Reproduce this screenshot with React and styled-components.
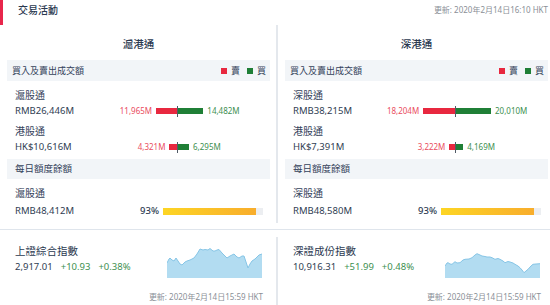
import React from 'react'
import styled, { createGlobalStyle } from 'styled-components'

const GlobalStyle = createGlobalStyle`
    html, body {
        margin: 0;
        padding: 0;
        background: #ffffff;
    }
    body {
        font-family: 'Noto Sans', 'Noto Sans CJK TC', sans-serif;
        font-size: 10px;
        line-height: 14px;
        color: #2f3d52;
        width: 550px;
        height: 305px;
        overflow: hidden;
    }
`

const colors = {
    text: '#2f3d52',
    muted: '#8a8f97',
    line: '#e4e8ed',
    headerBg: '#f2f5f8',
    red: '#e8283f',
    redText: '#ea4c60',
    green: '#1f7f36',
    greenText: '#3d8f50',
}

const SCALE = 1.75 / 1000

const Page = styled.div`
    width: 550px;
    height: 305px;
`
const TopBar = styled.header`
    height: 25px;
    box-sizing: border-box;
    display: flex;
    justify-content: space-between;
    align-items: flex-start;
    padding: 3px 2px 0 15px;
    border-left: 3px solid #e8264b;
`
const PageTitle = styled.h1`
    margin: 0;
    font-size: 10px;
    line-height: 14px;
    font-weight: 500;
    color: #2b3950;
`
const Stamp = styled.span`
    font-size: 8px;
    line-height: 14px;
    color: ${colors.muted};
    padding-right: ${(p) => p.$pad || 0}px;
`
const Columns = styled.div`
    display: grid;
    grid-template-columns: 276px 274px;
`
const Column = styled.section`
    box-sizing: border-box;
    padding: ${(p) => (p.$right ? '0 2px 0 7px' : '0 6px 0 7px')};
    border-left: ${(p) => (p.$right ? `2px solid ${colors.line}` : 'none')};
`
const PanelTitle = styled.h2`
    margin: 0;
    height: 35px;
    box-sizing: border-box;
    padding-top: 12px;
    text-align: center;
    font-size: 10.5px;
    line-height: 14px;
    font-weight: 500;
    color: #2b3950;
`
const SectionHead = styled.div`
    height: ${(p) => p.$h}px;
    display: flex;
    align-items: center;
    justify-content: space-between;
    padding: 0 4px 0 ${(p) => p.$indent}px;
    background: ${colors.headerBg};
    font-size: ${(p) => p.$size}px;
    color: #34425a;
`
const Legend = styled.div`
    display: flex;
    align-items: center;
    gap: 4px;
    font-size: 9px;
`
const Swatch = styled.span`
    width: 6px;
    height: 6px;
    background: ${(p) => p.$color};
    margin-left: 3px;
`
const Blocks = styled.div`
    padding: ${(p) => p.$pad};
    display: flex;
    flex-direction: column;
    gap: ${(p) => p.$gap}px;
`
const Block = styled.div`
    padding-left: 8px;
`
const Name = styled.div`
    font-size: 10px;
    line-height: 16px;
    color: #34425a;
`
const ValueRow = styled.div`
    display: flex;
    align-items: center;
    height: 16px;
    margin-top: ${(p) => p.$gap || 0}px;
    font-size: 9.5px;
    color: ${colors.text};
`
const Amount = styled.span`
    flex: 1;
`
const SellSide = styled.div`
    display: flex;
    align-items: center;
    gap: 4px;
    font-size: 8px;
    color: ${colors.redText};
`
const BuySide = styled.div`
    width: 92px;
    display: flex;
    align-items: center;
    gap: 4px;
    font-size: 8px;
    color: ${colors.greenText};
`
const Bar = styled.span`
    height: 6px;
    background: ${(p) => p.$color};
`
const Axis = styled.span`
    width: 1px;
    height: 11px;
    background: #505a66;
`
const Percent = styled.span`
    font-size: 9.5px;
    font-weight: 500;
    margin-right: 4px;
`
const Track = styled.div`
    width: 100px;
    height: 7px;
    margin-right: 7px;
    background: #eceef1;
`
const Fill = styled.div`
    height: 100%;
    background: linear-gradient(90deg, #fdd524, #f8ad2c);
`
const Bottom = styled.div`
    margin-top: 6px;
    padding-top: 7px;
    border-top: 1px solid #dfe5ec;
    display: grid;
    grid-template-columns: 276px 274px;
`
const IndexColumn = styled.section`
    box-sizing: border-box;
    height: 68px;
    display: flex;
    flex-direction: column;
    padding: ${(p) => (p.$right ? '0 2px 0 7px' : '0 6px 0 7px')};
    border-left: ${(p) => (p.$right ? `2px solid ${colors.line}` : 'none')};
`
const IndexRow = styled.div`
    display: flex;
    justify-content: space-between;
    padding: 6px 8px 0;
    height: 41px;
    box-sizing: border-box;
`
const IndexName = styled.div`
    font-size: 10.5px;
    line-height: 16px;
    color: #2b3950;
`
const Quote = styled.div`
    display: flex;
    gap: 8px;
    font-size: 9.5px;
    line-height: 16px;
`
const Change = styled.span`
    color: ${colors.greenText};
`
const Chart = styled.svg`
    margin-top: 4px;
    display: block;
`
const Footer = styled.div`
    margin-top: auto;
    margin-bottom: 1px;
    height: 14px;
    font-size: 8px;
    line-height: 14px;
    text-align: right;
`

const sections = [
    {
        title: '滬港通',
        trades: [
            { name: '滬股通', value: 'RMB26,446M', sell: 11965, buy: 14482 },
            { name: '港股通', value: 'HK$10,616M', sell: 4321, buy: 6295 },
        ],
        quota: { name: '滬股通', value: 'RMB48,412M', pct: 93 },
        index: {
            name: '上證綜合指數',
            last: '2,917.01',
            change: '+10.93',
            pct: '+0.38%',
            points: [
                [0, 16], [2, 12], [3, 11], [5, 13], [7, 14], [9, 11], [11, 14], [13, 17],
                [15, 18], [18, 15], [20, 14], [23, 13], [27, 11], [30, 7], [33, 2],
                [36, 3], [38, 2.5], [41, 3], [43, 1.5], [46, 4], [48, 4], [50, 3],
                [52, 2.5], [55, 6], [58, 9], [60, 11], [63, 9], [67, 7], [70, 10],
                [72, 11], [75, 9], [77, 9], [79, 15], [81, 21], [83, 17], [85, 14],
                [88, 12], [90, 10], [92, 8], [95, 7],
            ],
        },
    },
    {
        title: '深港通',
        trades: [
            { name: '深股通', value: 'RMB38,215M', sell: 18204, buy: 20010 },
            { name: '港股通', value: 'HK$7,391M', sell: 3222, buy: 4169 },
        ],
        quota: { name: '深股通', value: 'RMB48,580M', pct: 93 },
        index: {
            name: '深證成份指數',
            last: '10,916.31',
            change: '+51.99',
            pct: '+0.48%',
            points: [
                [0, 19], [2, 16], [3, 15.7], [5, 17], [7, 17.3], [10, 14.7], [12, 16],
                [15, 15.7], [18, 13], [20, 12.3], [24, 12], [27, 10.7], [30, 8],
                [32, 6.7], [35, 8], [37, 9], [40, 9.5], [42, 10], [45, 10], [47, 10.7],
                [50, 12.3], [53, 11.5], [55, 12.3], [58, 14], [60, 15.7], [63, 14.5],
                [65, 15], [68, 16], [70, 17.3], [73, 19], [75, 20.7], [77, 23],
                [79, 25.7], [81, 24], [83, 22.3], [86, 19], [88, 17.3], [91, 17],
                [95, 16.7],
            ],
        },
    },
]

function fmt(n) {
    return n.toLocaleString('en-US') + 'M'
}

function Spark({ points }) {
    const line = points.map(([x, y]) => `${x},${y}`).join(' ')
    const area = `0,31 ${line} 95,31`
    return (
        <Chart width="95" height="31" viewBox="0 0 95 31">
            <polygon points={area} fill="#b2dcf1" />
            <polyline points={line} fill="none" stroke="#86c5e6" strokeWidth="1" />
        </Chart>
    )
}

function TradeBlock({ trade }) {
    return (
        <Block>
            <Name>{trade.name}</Name>
            <ValueRow>
                <Amount>{trade.value}</Amount>
                <SellSide>
                    {fmt(trade.sell)}
                    <Bar $color={colors.red} style={{ width: trade.sell * SCALE }} />
                </SellSide>
                <Axis />
                <BuySide>
                    <Bar $color={colors.green} style={{ width: trade.buy * SCALE }} />
                    {fmt(trade.buy)}
                </BuySide>
            </ValueRow>
        </Block>
    )
}

function Panel({ section, right }) {
    return (
        <Column $right={right}>
            <PanelTitle>{section.title}</PanelTitle>
            <SectionHead $h={21} $indent={5} $size={9}>
                <span>買入及賣出成交額</span>
                <Legend>
                    <Swatch $color={colors.red} />
                    <span>賣</span>
                    <Swatch $color={colors.green} />
                    <span>買</span>
                </Legend>
            </SectionHead>
            <Blocks $pad="6px 0 4px" $gap={4}>
                {section.trades.map((t) => (
                    <TradeBlock key={t.name + t.value} trade={t} />
                ))}
            </Blocks>
            <SectionHead $h={20} $indent={8} $size={9.5}>
                <span>每日額度餘額</span>
            </SectionHead>
            <Blocks $pad="6px 0 4px" $gap={0}>
                <Block>
                    <Name>{section.quota.name}</Name>
                    <ValueRow $gap={2}>
                        <Amount>{section.quota.value}</Amount>
                        <Percent>{section.quota.pct}%</Percent>
                        <Track>
                            <Fill style={{ width: `${section.quota.pct}%` }} />
                        </Track>
                    </ValueRow>
                </Block>
            </Blocks>
        </Column>
    )
}

function IndexPanel({ index, right }) {
    return (
        <IndexColumn $right={right}>
            <IndexRow>
                <div>
                    <IndexName>{index.name}</IndexName>
                    <Quote>
                        <span>{index.last}</span>
                        <Change>{index.change}</Change>
                        <Change>{index.pct}</Change>
                    </Quote>
                </div>
                <Spark points={index.points} />
            </IndexRow>
            <Footer>
                <Stamp $pad={7}>更新: 2020年2月14日15:59 HKT</Stamp>
            </Footer>
        </IndexColumn>
    )
}

export default function App() {
    return (
        <Page>
            <GlobalStyle />
            <TopBar>
                <PageTitle>交易活動</PageTitle>
                <Stamp>更新: 2020年2月14日16:10 HKT</Stamp>
            </TopBar>
            <Columns>
                <Panel section={sections[0]} />
                <Panel section={sections[1]} right />
            </Columns>
            <Bottom>
                <IndexPanel index={sections[0].index} />
                <IndexPanel index={sections[1].index} right />
            </Bottom>
        </Page>
    )
}
